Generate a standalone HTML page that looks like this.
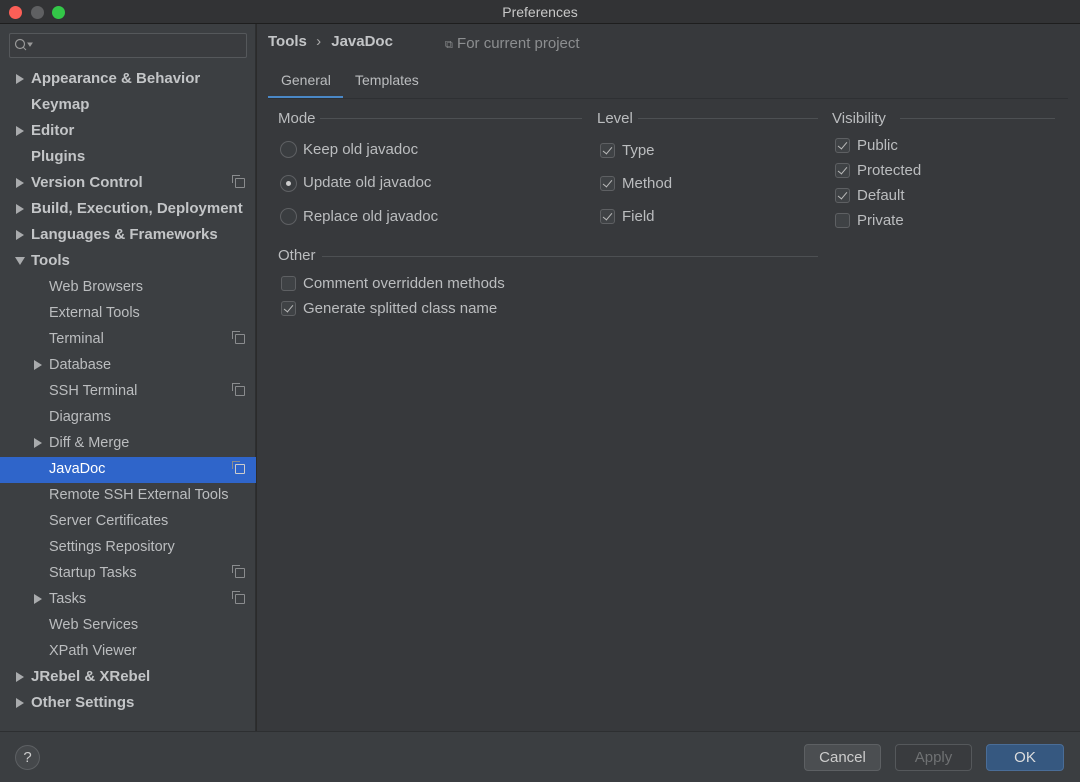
<!DOCTYPE html>
<html><head><meta charset="utf-8"><style>
*{margin:0;padding:0;box-sizing:border-box}
body{width:1080px;height:782px;overflow:hidden;background:#2b2b2b;font-family:"Liberation Sans",sans-serif;font-size:15px;color:#bbbdbf;position:relative}
.a{position:absolute;white-space:nowrap}
#title{left:0;top:0;width:1080px;height:24px;background:#323335;border-bottom:1px solid #1e1e1e;text-align:center;line-height:24px;color:#c8c8c8;font-size:14px}
.dot{position:absolute;top:6px;width:13px;height:13px;border-radius:50%}
#side{left:0;top:24px;width:256px;height:707px;background:#3c3f42;border-right:1px solid #2d2f31}
#main{left:257px;top:24px;width:823px;height:707px;background:#37393c}
#bot{left:0;top:731px;width:1080px;height:51px;background:#3b3e41;border-top:1px solid #2d2f31}
.it{position:absolute;height:26px;line-height:26px;width:256px;left:0}
.b{font-weight:bold;color:#c3c5c7}
.tri{position:absolute;width:0;height:0;border-top:5px solid transparent;border-bottom:5px solid transparent;border-left:8px solid #a9abad;top:8px}
.trd{position:absolute;width:0;height:0;border-left:5px solid transparent;border-right:5px solid transparent;border-top:8px solid #a9abad;top:9px}
.cp{position:absolute;left:235px;top:8px;width:10px;height:10px;border:1px solid #8a8c8e;border-radius:1px}
.cp:after{content:"";position:absolute;left:-4px;top:-4px;width:7px;height:7px;border-left:1px solid #8a8c8e;border-top:1px solid #8a8c8e}
.cb{position:absolute;width:15px;height:15px;border:1px solid #5e6063;border-radius:3px;background:#3f4245}
.cb.c:after{content:"";position:absolute;left:4px;top:1px;width:4px;height:8px;border-right:1.5px solid #bbb;border-bottom:1.5px solid #bbb;transform:rotate(40deg)}
.rd{position:absolute;width:17px;height:17px;border:1px solid #5e6063;border-radius:50%;background:#3a3d40}
.rd.s:after{content:"";position:absolute;left:5px;top:5px;width:5px;height:5px;border-radius:50%;background:#ccc}
.ln{position:absolute;height:1px;background:#4d5053}
.btn{position:absolute;top:744px;height:27px;border-radius:4px;text-align:center;line-height:25px;font-size:15px}
</style></head><body>
<div class="a" id="title">Preferences
<div class="dot" style="left:9px;background:#fc5f57"></div><div class="dot" style="left:31px;background:#5f6062"></div><div class="dot" style="left:52px;background:#33c748"></div></div>
<div class="a" id="side">
<div class="a" style="left:9px;top:9px;width:238px;height:25px;border:1px solid #55585b;border-radius:2px;background:#3a3c3f"></div>
<svg class="a" style="left:14px;top:14px" width="20" height="14"><circle cx="6" cy="6" r="4.5" stroke="#999" fill="none" stroke-width="1.2"/><path d="M9 9l3 3M14 5l2 3 2-3z" stroke="#999" fill="#999"/></svg>
</div>
<div class="a" id="main"></div>
<div class="a" id="bot"></div>
<div class="a" style="left:0;top:457px;width:256px;height:26px;background:#2f65ca"></div>
<div id="items"></div>
<div class="a b" style="left:268px;top:33px;font-size:15px">Tools <span style="font-weight:normal;margin:0 6px 0 5px;color:#aaa">›</span> JavaDoc</div>
<div class="a" style="left:445px;top:35px;color:#8c8e90;font-size:15px"><span style="font-size:11px">⧉</span> For current project</div>
<div class="a" style="left:281px;top:72px;font-size:14px">General</div>
<div class="a" style="left:355px;top:72px;font-size:14px">Templates</div>
<div class="a" style="left:268px;top:96px;width:75px;height:3px;background:#4a88c7"></div>
<div class="ln" style="left:268px;top:98px;width:800px;background:#2e3033"></div>
<div class="a" style="left:278px;top:110px">Mode</div><div class="ln" style="left:320px;top:118px;width:262px"></div>
<div class="a" style="left:597px;top:110px">Level</div><div class="ln" style="left:638px;top:118px;width:180px"></div>
<div class="a" style="left:832px;top:110px">Visibility</div><div class="ln" style="left:900px;top:118px;width:155px"></div>
<div class="rd" style="left:280px;top:141px"></div><div class="a" style="left:303px;top:141px">Keep old javadoc</div>
<div class="rd s" style="left:280px;top:175px"></div><div class="a" style="left:303px;top:174px">Update old javadoc</div>
<div class="rd" style="left:280px;top:208px"></div><div class="a" style="left:303px;top:208px">Replace old javadoc</div>
<div class="cb c" style="left:600px;top:143px"></div><div class="a" style="left:622px;top:142px">Type</div>
<div class="cb c" style="left:600px;top:176px"></div><div class="a" style="left:622px;top:175px">Method</div>
<div class="cb c" style="left:600px;top:209px"></div><div class="a" style="left:622px;top:208px">Field</div>
<div class="cb c" style="left:835px;top:138px"></div><div class="a" style="left:857px;top:137px">Public</div>
<div class="cb c" style="left:835px;top:163px"></div><div class="a" style="left:857px;top:162px">Protected</div>
<div class="cb c" style="left:835px;top:188px"></div><div class="a" style="left:857px;top:187px">Default</div>
<div class="cb" style="left:835px;top:213px"></div><div class="a" style="left:857px;top:212px">Private</div>
<div class="a" style="left:278px;top:247px">Other</div><div class="ln" style="left:322px;top:256px;width:496px"></div>
<div class="cb" style="left:281px;top:276px"></div><div class="a" style="left:303px;top:275px">Comment overridden methods</div>
<div class="cb c" style="left:281px;top:301px"></div><div class="a" style="left:303px;top:300px">Generate splitted class name</div>
<div class="a" style="left:15px;top:745px;width:25px;height:25px;border-radius:50%;border:1px solid #5d6063;background:#45484b;text-align:center;line-height:23px;color:#ccc;font-size:15px">?</div>
<div class="btn" style="left:804px;width:77px;background:#4b4e51;border:1px solid #5d6063;color:#ccc">Cancel</div>
<div class="btn" style="left:895px;width:77px;background:#393b3e;border:1px solid #55585b;color:#6f7173">Apply</div>
<div class="btn" style="left:986px;width:78px;background:#365880;border:1px solid #4a6d97;color:#ddd">OK</div>
<script>
var L=[["Appearance & Behavior",1,1,0,0],["Keymap",1,0,0,0],["Editor",1,1,0,0],["Plugins",1,0,0,0],["Version Control",1,1,0,1],["Build, Execution, Deployment",1,1,0,0],["Languages & Frameworks",1,1,0,0],["Tools",1,2,0,0],["Web Browsers",0,0,1,0],["External Tools",0,0,1,0],["Terminal",0,0,1,1],["Database",0,1,1,0],["SSH Terminal",0,0,1,1],["Diagrams",0,0,1,0],["Diff & Merge",0,1,1,0],["JavaDoc",0,0,1,1],["Remote SSH External Tools",0,0,1,0],["Server Certificates",0,0,1,0],["Settings Repository",0,0,1,0],["Startup Tasks",0,0,1,1],["Tasks",0,1,1,1],["Web Services",0,0,1,0],["XPath Viewer",0,0,1,0],["JRebel & XRebel",1,1,0,0],["Other Settings",1,1,0,0]];
var h="";L.forEach(function(e,i){var y=66+i*26,x=e[3]?49:31,tx=e[3]?33:15;
h+='<div class="it" style="top:'+y+'px">';
if(e[2]==1)h+='<div class="tri" style="left:'+(tx+1)+'px"></div>';
if(e[2]==2)h+='<div class="trd" style="left:'+tx+'px"></div>';
h+='<span class="a'+(e[1]?' b':'')+'" style="left:'+x+'px;top:0;font-size:'+(e[1]?15:14.5)+'px;'+(i==15?'color:#fff':'')+'">'+e[0].replace("&","&amp;")+'</span>';
if(e[4])h+='<div class="cp"'+(i==15?' style="border-color:#ccc"':'')+'></div>';
h+='</div>';});
document.getElementById("items").innerHTML=h;
</script>
</body></html>
